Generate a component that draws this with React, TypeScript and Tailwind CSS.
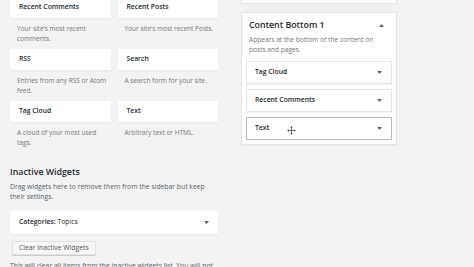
const font = { fontFamily: '"Open Sans", "Noto Sans", sans-serif' };

function Caret({ up = false }: { up?: boolean }) {
  return (
    <svg width="5" height="3" viewBox="0 0 5 3" className={up ? "rotate-180" : ""}>
      <path d="M0 0 L5 0 L2.5 3 Z" fill="#666" />
    </svg>
  );
}

function MoveCursor() {
  return (
    <svg width="9" height="9" viewBox="0 0 9 9" className="absolute left-[32px] top-[3px]">
      <path
        d="M4.5 0 L6 1.8 L5 1.8 L5 4 L7.2 4 L7.2 3 L9 4.5 L7.2 6 L7.2 5 L5 5 L5 7.2 L6 7.2 L4.5 9 L3 7.2 L4 7.2 L4 5 L1.8 5 L1.8 6 L0 4.5 L1.8 3 L1.8 4 L4 4 L4 1.8 L3 1.8 Z"
        fill="#333"
        stroke="#fff"
        strokeWidth="0.4"
      />
    </svg>
  );
}

const available = [
  ["Recent Comments", "Your site’s most recent comments."],
  ["Recent Posts", "Your site’s most recent Posts."],
  ["RSS", "Entries from any RSS or Atom feed."],
  ["Search", "A search form for your site."],
  ["Tag Cloud", "A cloud of your most used tags."],
  ["Text", "Arbitrary text or HTML."],
];

function SidebarWidget({ title, active = false }: { title: string; active?: boolean }) {
  return (
    <div
      className={`flex h-[23px] items-center justify-between bg-white pl-[8px] pr-[9px] ${
        active ? "border border-[#b4b9be]" : "border border-[#e5e5e5] shadow-[0_1px_1px_rgba(0,0,0,0.04)]"
      }`}
    >
      <span className="relative text-[6.8px] font-semibold text-[#23282d]">
        {title}
        {active && <MoveCursor />}
      </span>
      <Caret />
    </div>
  );
}

export default function App() {
  return (
    <div className="flex h-[267px] w-[474px] overflow-hidden bg-[#f3f3f3]" style={font}>
      {/* available widgets + inactive */}
      <div className="ml-[10px] w-[208px] shrink-0">
        <div className="-mt-[3px] grid grid-cols-2 gap-x-[7px]">
          {available.map(([title, desc]) => (
            <div key={title} className="h-[52px]">
              <div className="flex h-[21px] items-center bg-white px-[9px] text-[6.8px] font-semibold text-[#23282d] shadow-[0_1px_1px_rgba(0,0,0,0.04)]">
                {title}
              </div>
              <p className="pl-[7px] pr-[4px] pt-[6px] text-[6.5px] leading-[9.5px] text-[#72777c]">{desc}</p>
            </div>
          ))}
        </div>

        <h3 className="mt-[12px] text-[8.8px] font-semibold leading-[14px] text-[#23282d]">Inactive Widgets</h3>
        <p className="mt-[3px] text-[6.8px] leading-[9.5px] text-[#555d66]">
          Drag widgets here to remove them from the sidebar but keep their settings.
        </p>
        <div className="mt-[10px] flex h-[23px] items-center justify-between bg-white pl-[9px] pr-[9px] text-[6.8px] text-[#23282d] shadow-[0_1px_1px_rgba(0,0,0,0.04)]">
          <span>
            <span className="font-semibold">Categories:</span> Topics
          </span>
          <Caret />
        </div>
        <button className="ml-[2px] mt-[7px] flex h-[14px] items-center rounded-[2px] border border-[#e2e2e2] bg-[#f7f7f7] px-[6px] text-[6.8px] text-[#555] shadow-[0_1px_0_#ccc]">
          Clear Inactive Widgets
        </button>
        <p className="mt-[6px] whitespace-nowrap text-[6.8px] leading-[9.5px] text-[#555d66]">
          This will clear all items from the inactive widgets list. You will not
        </p>
      </div>

      {/* sidebars */}
      <div className="ml-[23px] w-[156px] shrink-0">
        <div className="-mt-[4px] h-[8px] border border-[#e5e5e5] bg-white" />
        <div className="mt-[8px] border border-[#e5e5e5] bg-white px-[4px] pb-[4px] shadow-[0_1px_1px_rgba(0,0,0,0.04)]">
          <div className="flex items-center justify-between pl-[3px] pr-[8px] pt-[5px]">
            <h2 className="text-[8.8px] font-semibold leading-[14px] text-[#23282d]">Content Bottom 1</h2>
            <Caret up />
          </div>
          <p className="mt-[3px] pl-[3px] pr-[8px] text-[6.6px] leading-[9.5px] text-[#72777c]">
            Appears at the bottom of the content on posts and pages.
          </p>
          <div className="mt-[7px] flex flex-col gap-[5px]">
            <SidebarWidget title="Tag Cloud" />
            <SidebarWidget title="Recent Comments" />
            <SidebarWidget title="Text" active />
          </div>
        </div>
      </div>
    </div>
  );
}
